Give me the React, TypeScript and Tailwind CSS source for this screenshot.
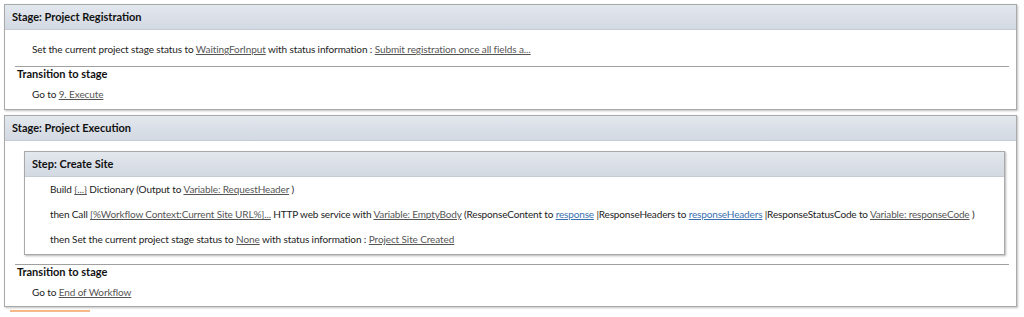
import React from "react";

const font = { fontFamily: 'Lato, "Open Sans", sans-serif' };

function L({ children, blue }: { children: React.ReactNode; blue?: boolean }) {
  return (
    <span className={blue ? "underline text-[#3a6fb0]" : "underline text-[#555555]"}>{children}</span>
  );
}

function Header({ children }: { children: React.ReactNode }) {
  return (
    <div className="flex items-center h-[25px] px-[7px] bg-gradient-to-b from-[#e3e7ee] to-[#d3d9e2] border-b border-[#c5ccd6] text-[11px] font-bold text-[#111] tracking-[0px]">
      {children}
    </div>
  );
}

export default function App() {
  return (
    <div className="w-[1024px] h-[317px] bg-white text-[10px] tracking-[-0.1px] text-[#222] overflow-hidden" style={font}>
      <div className="pt-[4px] pl-[4px] pr-[7px]">
        {/* Stage 1 */}
        <div className="border border-[#a9a9a9] shadow-[1px_1px_2px_rgba(0,0,0,0.25)] bg-white">
          <Header>Stage: Project Registration</Header>
          <div className="pl-[27px] pt-[12px] h-[36px] leading-[14px] whitespace-nowrap">
            Set the current project stage status to <L>WaitingForInput</L> with status information : <L>Submit registration once all fields a...</L>
          </div>
          <div className="ml-[10px] mr-[7px] border-t border-[#a0a0a0]" />
          <div className="pl-[12px] leading-[13px] text-[11px] tracking-[0px] font-bold text-[#111]">Transition to stage</div>
          <div className="pl-[27px] pt-[7px] pb-[8px] leading-[14px]">
            Go to <L>9. Execute</L>
          </div>
        </div>

        {/* Stage 2 */}
        <div className="mt-[5px] border border-[#a9a9a9] shadow-[1px_1px_2px_rgba(0,0,0,0.25)] bg-white">
          <Header>Stage: Project Execution</Header>
          <div className="pt-[10px] pl-[19px] pr-[11px]">
            <div className="border border-[#a9a9a9] shadow-[1px_1px_2px_rgba(0,0,0,0.3)] bg-white">
              <Header>Step: Create Site</Header>
              <div className="pl-[25px] pt-[5px] pb-[8px] leading-[14px] flex flex-col gap-[11px] whitespace-nowrap">
                <div>
                  Build <L>{"{...}"}</L> Dictionary (Output to <L>Variable: RequestHeader</L> )
                </div>
                <div className="tracking-[-0.15px]">
                  then Call <L>[%Workflow Context:Current Site URL%]...</L> HTTP web service with <L>Variable: EmptyBody</L> (ResponseContent to <L blue>response</L> |ResponseHeaders to <L blue>responseHeaders</L> |ResponseStatusCode to <L>Variable: responseCode</L> )
                </div>
                <div>
                  then Set the current project stage status to <L>None</L> with status information : <L>Project Site Created</L>
                </div>
              </div>
            </div>
          </div>
          <div className="mt-[9px] ml-[10px] mr-[7px] border-t border-[#a0a0a0]" />
          <div className="pl-[12px] leading-[13px] text-[11px] tracking-[0px] font-bold text-[#111]">Transition to stage</div>
          <div className="pl-[27px] pt-[7px] pb-[7px] leading-[14px]">
            Go to <L>End of Workflow</L>
          </div>
        </div>
        <div className="mt-[3px] ml-[6px] w-[80px] h-[2px] bg-[#f6b98a]" />
      </div>
    </div>
  );
}
